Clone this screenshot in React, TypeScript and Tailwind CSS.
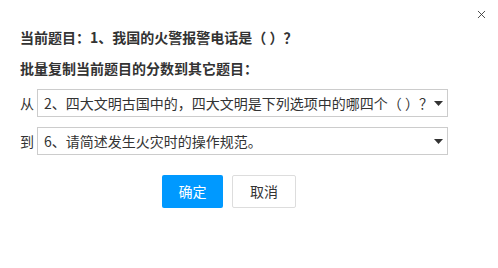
import { X } from "lucide-react";

const FONT = { fontFamily: '"Microsoft YaHei", "Noto Sans CJK SC", "Liberation Sans", sans-serif' };

function Caret() {
  return (
    <svg width="9" height="5" viewBox="0 0 9 5" className="shrink-0">
      <path d="M0 0h9L4.5 5z" fill="#333" />
    </svg>
  );
}

function FakeSelect({ label, value }: { label: string; value: string }) {
  return (
    <div className="flex items-center">
      <span className="w-[17px] text-[14px] text-[#333]">{label}</span>
      <div className="flex h-[28px] w-[411px] items-center justify-between border border-[#ccc] bg-white pl-[6px] pr-[4px]">
        <span className="truncate text-[14px] text-[#333]">{value}</span>
        <Caret />
      </div>
    </div>
  );
}

export default function App() {
  return (
    <div className="relative h-[268px] w-[498px] bg-white" style={FONT}>
      <button className="absolute right-[10px] top-[8px] text-[#333]">
        <X size={13} strokeWidth={1.6} />
      </button>
      <div className="px-[20px] pt-[27px]">
        <p className="text-[14px] font-bold leading-[20px] text-[#333]">当前题目：1、我国的火警报警电话是（ ）？</p>
        <p className="mt-[11px] text-[14px] font-bold leading-[20px] text-[#333]">批量复制当前题目的分数到其它题目：</p>
        <div className="mt-[11px] flex flex-col gap-[10px]">
          <FakeSelect label="从" value="2、四大文明古国中的，四大文明是下列选项中的哪四个（ ）？" />
          <FakeSelect label="到" value="6、请简述发生火灾时的操作规范。" />
        </div>
        <div className="mt-[20px] flex gap-[9px] pl-[142px]">
          <button className="h-[33px] w-[61px] rounded-[2px] bg-[#0099ff] text-[14px] text-white">确定</button>
          <button className="h-[33px] w-[64px] rounded-[2px] border border-[#ddd] bg-white text-[14px] text-[#333]">取消</button>
        </div>
      </div>
    </div>
  );
}
